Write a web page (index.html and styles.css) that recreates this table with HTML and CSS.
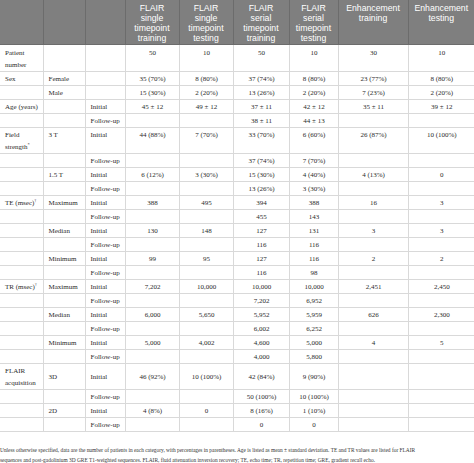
FILE: index.html
```html
<!DOCTYPE html>
<html>
<head>
<meta charset="utf-8">
<link rel="stylesheet" href="styles.css">
</head>
<body>
<table class="data">
  <colgroup>
    <col class="c1"><col class="c2"><col class="c3"><col class="c4"><col class="c5"><col class="c6"><col class="c7"><col class="c8"><col class="c9">
  </colgroup>
  <thead>
    <tr>
      <th></th><th></th><th></th>
      <th>FLAIR<br>single<br>timepoint<br>training</th>
      <th>FLAIR<br>single<br>timepoint<br>testing</th>
      <th>FLAIR<br>serial<br>timepoint<br>training</th>
      <th>FLAIR<br>serial<br>timepoint<br>testing</th>
      <th>Enhancement<br>training</th>
      <th>Enhancement<br>testing</th>
    </tr>
  </thead>
  <tbody>
    <tr><td>Patient number</td><td></td><td></td><td>50</td><td>10</td><td>50</td><td>10</td><td>30</td><td>10</td></tr>
    <tr><td>Sex</td><td>Female</td><td></td><td>35 (70%)</td><td>8 (80%)</td><td>37 (74%)</td><td>8 (80%)</td><td>23 (77%)</td><td>8 (80%)</td></tr>
    <tr><td></td><td>Male</td><td></td><td>15 (30%)</td><td>2 (20%)</td><td>13 (26%)</td><td>2 (20%)</td><td>7 (23%)</td><td>2 (20%)</td></tr>
    <tr><td>Age (years)</td><td></td><td>Initial</td><td>45 ± 12</td><td>49 ± 12</td><td>37 ± 11</td><td>42 ± 12</td><td>35 ± 11</td><td>39 ± 12</td></tr>
    <tr><td></td><td></td><td>Follow-up</td><td></td><td></td><td>38 ± 11</td><td>44 ± 13</td><td></td><td></td></tr>
    <tr><td>Field strength<sup>*</sup></td><td>3 T</td><td>Initial</td><td>44 (88%)</td><td>7 (70%)</td><td>33 (70%)</td><td>6 (60%)</td><td>26 (87%)</td><td>10 (100%)</td></tr>
    <tr><td></td><td></td><td>Follow-up</td><td></td><td></td><td>37 (74%)</td><td>7 (70%)</td><td></td><td></td></tr>
    <tr><td></td><td>1.5 T</td><td>Initial</td><td>6 (12%)</td><td>3 (30%)</td><td>15 (30%)</td><td>4 (40%)</td><td>4 (13%)</td><td>0</td></tr>
    <tr><td></td><td></td><td>Follow-up</td><td></td><td></td><td>13 (26%)</td><td>3 (30%)</td><td></td><td></td></tr>
    <tr><td>TE (msec)<sup>†</sup></td><td>Maximum</td><td>Initial</td><td>388</td><td>495</td><td>394</td><td>388</td><td>16</td><td>3</td></tr>
    <tr><td></td><td></td><td>Follow-up</td><td></td><td></td><td>455</td><td>143</td><td></td><td></td></tr>
    <tr><td></td><td>Median</td><td>Initial</td><td>130</td><td>148</td><td>127</td><td>131</td><td>3</td><td>3</td></tr>
    <tr><td></td><td></td><td>Follow-up</td><td></td><td></td><td>116</td><td>116</td><td></td><td></td></tr>
    <tr><td></td><td>Minimum</td><td>Initial</td><td>99</td><td>95</td><td>127</td><td>116</td><td>2</td><td>2</td></tr>
    <tr><td></td><td></td><td>Follow-up</td><td></td><td></td><td>116</td><td>98</td><td></td><td></td></tr>
    <tr><td>TR (msec)<sup>†</sup></td><td>Maximum</td><td>Initial</td><td>7,202</td><td>10,000</td><td>10,000</td><td>10,000</td><td>2,451</td><td>2,450</td></tr>
    <tr><td></td><td></td><td>Follow-up</td><td></td><td></td><td>7,202</td><td>6,952</td><td></td><td></td></tr>
    <tr><td></td><td>Median</td><td>Initial</td><td>6,000</td><td>5,650</td><td>5,952</td><td>5,959</td><td>626</td><td>2,300</td></tr>
    <tr><td></td><td></td><td>Follow-up</td><td></td><td></td><td>6,002</td><td>6,252</td><td></td><td></td></tr>
    <tr><td></td><td>Minimum</td><td>Initial</td><td>5,000</td><td>4,002</td><td>4,600</td><td>5,000</td><td>4</td><td>5</td></tr>
    <tr><td></td><td></td><td>Follow-up</td><td></td><td></td><td>4,000</td><td>5,800</td><td></td><td></td></tr>
    <tr class="mid"><td>FLAIR acquisition</td><td>3D</td><td>Initial</td><td>46 (92%)</td><td>10 (100%)</td><td>42 (84%)</td><td>9 (90%)</td><td></td><td></td></tr>
    <tr><td></td><td></td><td>Follow-up</td><td></td><td></td><td>50 (100%)</td><td>10 (100%)</td><td></td><td></td></tr>
    <tr><td></td><td>2D</td><td>Initial</td><td>4 (8%)</td><td>0</td><td>8 (16%)</td><td>1 (10%)</td><td></td><td></td></tr>
    <tr><td></td><td></td><td>Follow-up</td><td></td><td></td><td>0</td><td>0</td><td></td><td></td></tr>
  </tbody>
</table>
<p class="note">Unless otherwise specified, data are the number of patients in each category, with percentages in parentheses. Age is listed as mean ± standard deviation. TE and TR values are listed for FLAIR<br>sequences and post-gadolinium 3D GRE T1-weighted sequences. FLAIR, fluid attenuation inversion recovery; TE, echo time; TR, repetition time; GRE, gradient recall echo.</p>
</body>
</html>
```

FILE: styles.css
```css
html, body {
  margin: 0;
  padding: 0;
  background: #ffffff;
}

.data {
  width: 474px;
  border-collapse: collapse;
  table-layout: fixed;
  font-family: "Liberation Serif", "Times New Roman", serif;
  font-size: 7px;
  color: #2b2b2b;
}

.c1 { width: 43px; }
.c2 { width: 42px; }
.c3 { width: 40px; }
.c4 { width: 54px; }
.c5 { width: 54px; }
.c6 { width: 56px; }
.c7 { width: 49px; }
.c8 { width: 70px; }
.c9 { width: 66px; }

.data th {
  background: #7f7f7f;
  color: #ffffff;
  font-family: "Liberation Sans", Arial, sans-serif;
  font-weight: 400;
  font-size: 8.7px;
  line-height: 10px;
  height: 40px;
  padding: 3px 2px 1px;
  text-align: center;
  vertical-align: top;
  white-space: nowrap;
  border-left: 1px solid #6c6c6c;
  border-bottom: 1px solid #6c6c6c;
}

.data th:first-child {
  border-left: none;
}

.data td {
  line-height: 12px;
  padding: 1px 4px 0 5px;
  vertical-align: top;
  text-align: center;
  border: 1px solid #d9d9d9;
}

.data td:nth-child(-n+3) {
  text-align: left;
}

.data td:first-child {
  border-left: none;
}

.data td:last-child {
  border-right: none;
}

.data tbody tr:first-child td {
  padding-top: 2px;
}

.data tr.mid td {
  vertical-align: middle;
}

.data sup {
  font-size: 4.5px;
  line-height: 0;
  vertical-align: 3px;
}

.note {
  margin: 14px 0 0;
  font-family: "Liberation Serif", "Times New Roman", serif;
  font-size: 5.4px;
  line-height: 9.5px;
  color: #333333;
  white-space: nowrap;
}
```
